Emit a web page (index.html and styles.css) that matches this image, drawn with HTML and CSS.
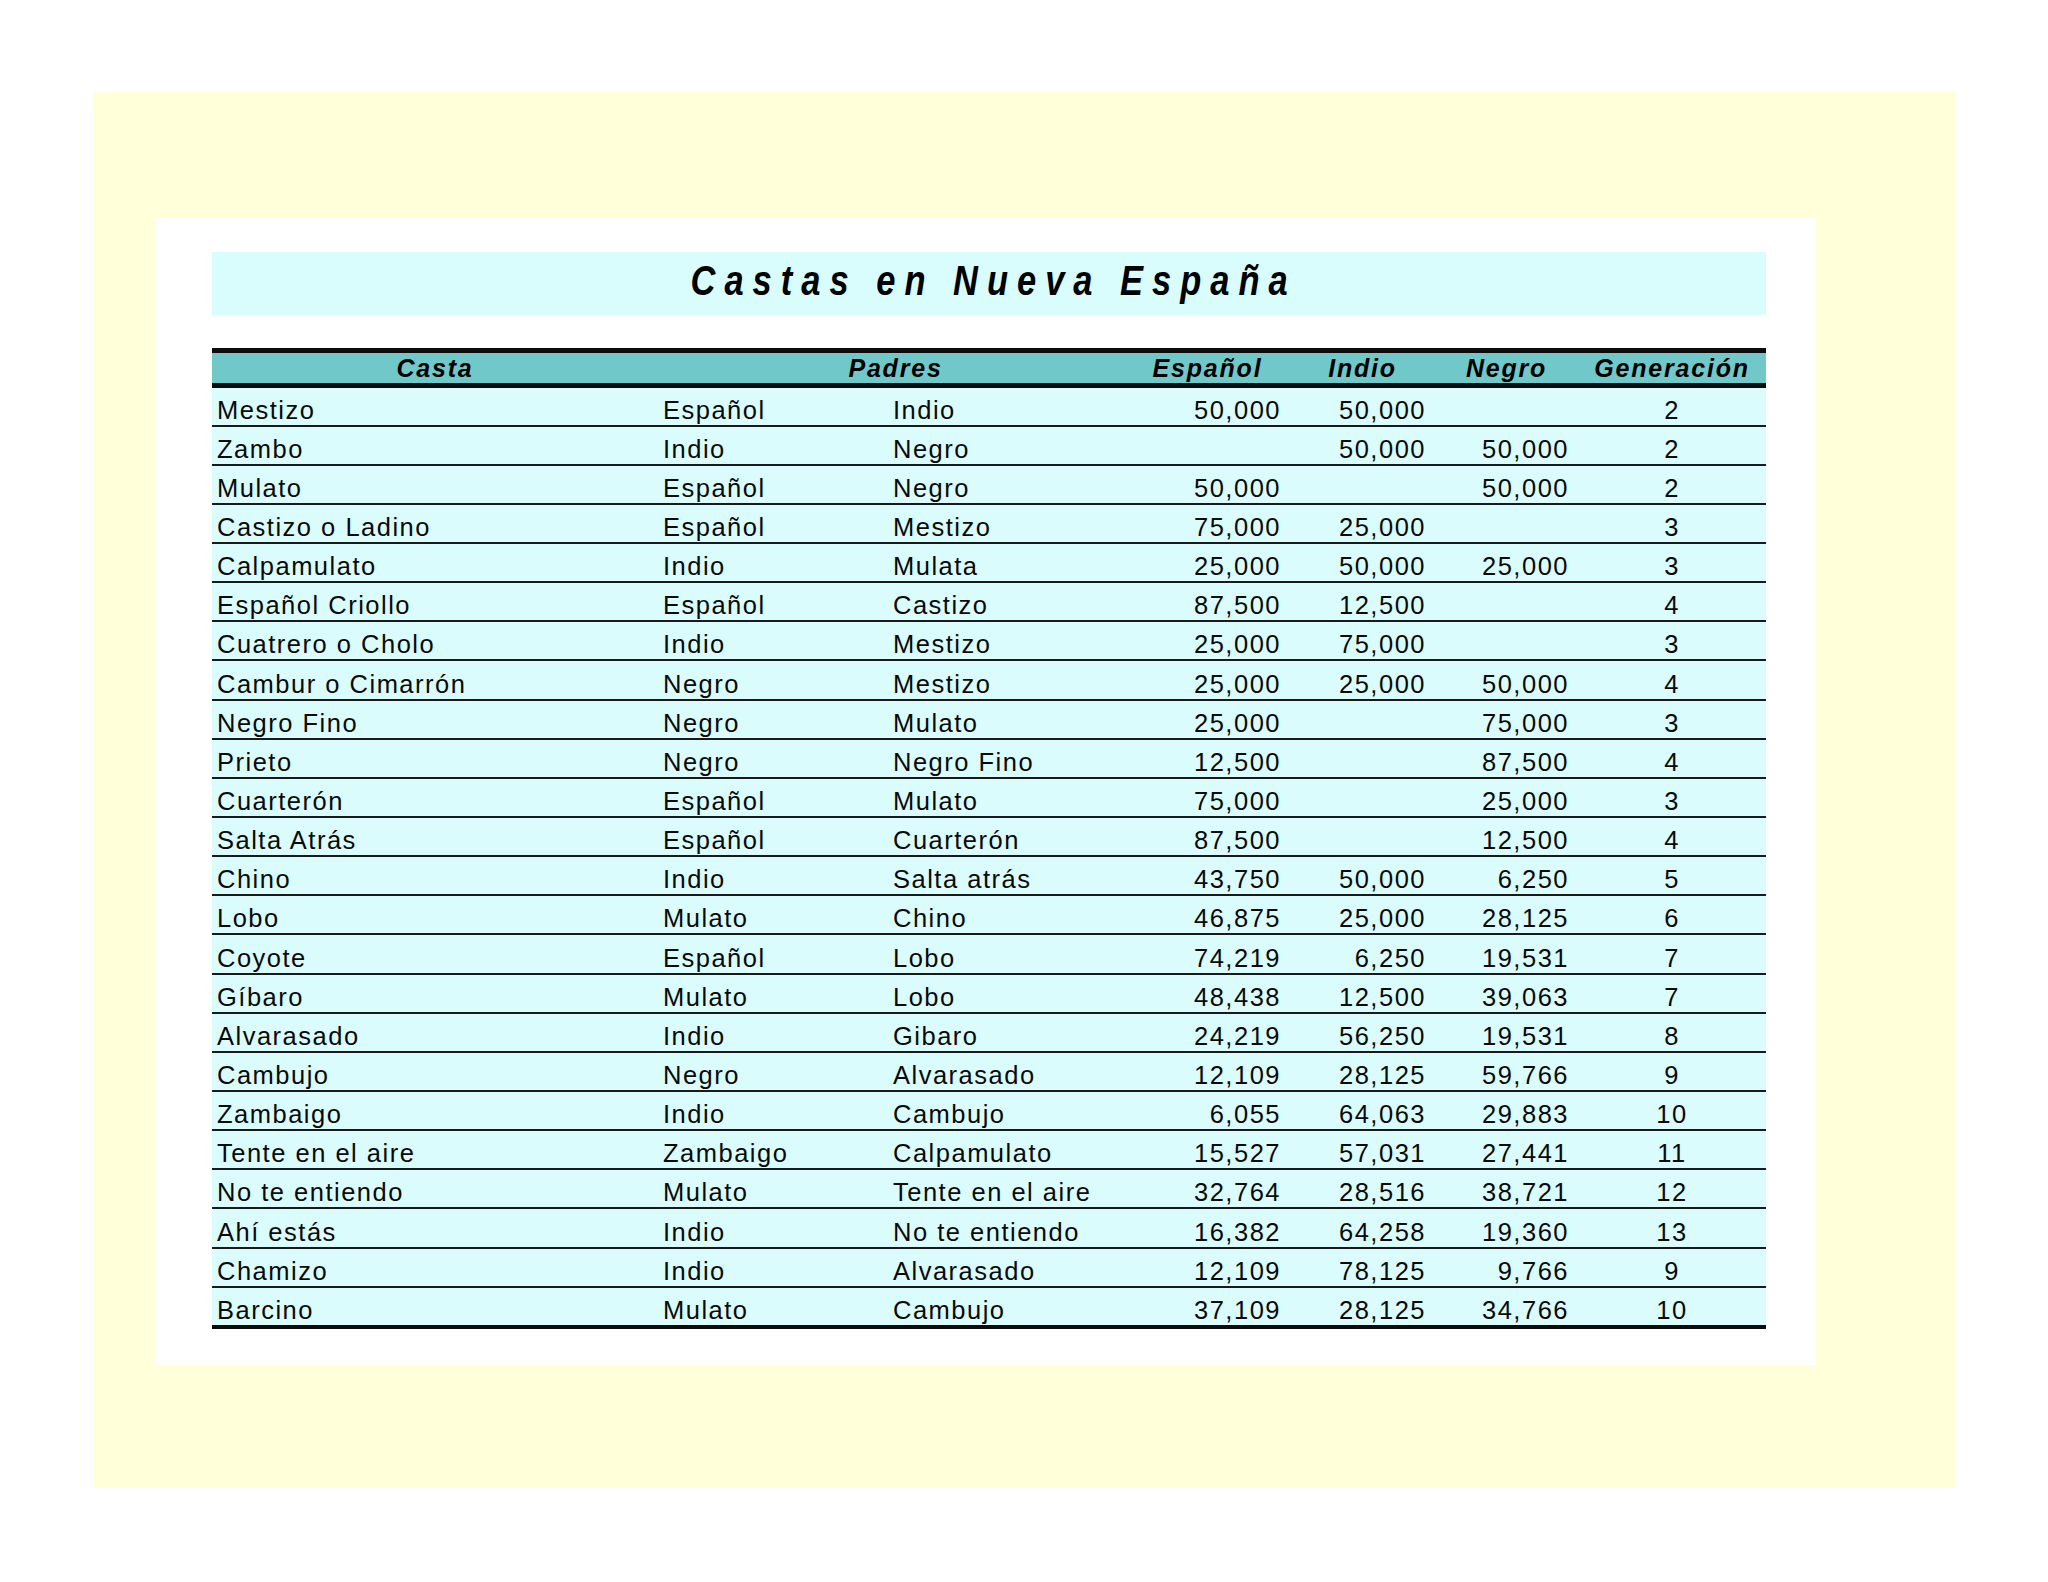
FILE: index.html
```html
<!DOCTYPE html>
<html lang="es">
<head>
<meta charset="utf-8">
<title>Castas en Nueva España</title>
<link rel="stylesheet" href="styles.css">
</head>
<body>
<div class="sheet">
  <div class="panel">
    <div class="title-bar"><h1 class="title">Castas en Nueva España</h1></div>
    <div class="table">
      <div class="head">
        <div class="hc c-casta">Casta</div>
        <div class="hc c-padres">Padres</div>
        <div class="hc">Español</div>
        <div class="hc">Indio</div>
        <div class="hc">Negro</div>
        <div class="hc">Generación</div>
      </div>
      <div class="row"><span>Mestizo</span><span>Español</span><span>Indio</span><span class="n">50,000</span><span class="n">50,000</span><span class="n"></span><span class="g">2</span></div>
      <div class="row"><span>Zambo</span><span>Indio</span><span>Negro</span><span class="n"></span><span class="n">50,000</span><span class="n">50,000</span><span class="g">2</span></div>
      <div class="row"><span>Mulato</span><span>Español</span><span>Negro</span><span class="n">50,000</span><span class="n"></span><span class="n">50,000</span><span class="g">2</span></div>
      <div class="row"><span>Castizo o Ladino</span><span>Español</span><span>Mestizo</span><span class="n">75,000</span><span class="n">25,000</span><span class="n"></span><span class="g">3</span></div>
      <div class="row"><span>Calpamulato</span><span>Indio</span><span>Mulata</span><span class="n">25,000</span><span class="n">50,000</span><span class="n">25,000</span><span class="g">3</span></div>
      <div class="row"><span>Español Criollo</span><span>Español</span><span>Castizo</span><span class="n">87,500</span><span class="n">12,500</span><span class="n"></span><span class="g">4</span></div>
      <div class="row"><span>Cuatrero o Cholo</span><span>Indio</span><span>Mestizo</span><span class="n">25,000</span><span class="n">75,000</span><span class="n"></span><span class="g">3</span></div>
      <div class="row"><span>Cambur o Cimarrón</span><span>Negro</span><span>Mestizo</span><span class="n">25,000</span><span class="n">25,000</span><span class="n">50,000</span><span class="g">4</span></div>
      <div class="row"><span>Negro Fino</span><span>Negro</span><span>Mulato</span><span class="n">25,000</span><span class="n"></span><span class="n">75,000</span><span class="g">3</span></div>
      <div class="row"><span>Prieto</span><span>Negro</span><span>Negro Fino</span><span class="n">12,500</span><span class="n"></span><span class="n">87,500</span><span class="g">4</span></div>
      <div class="row"><span>Cuarterón</span><span>Español</span><span>Mulato</span><span class="n">75,000</span><span class="n"></span><span class="n">25,000</span><span class="g">3</span></div>
      <div class="row"><span>Salta Atrás</span><span>Español</span><span>Cuarterón</span><span class="n">87,500</span><span class="n"></span><span class="n">12,500</span><span class="g">4</span></div>
      <div class="row"><span>Chino</span><span>Indio</span><span>Salta atrás</span><span class="n">43,750</span><span class="n">50,000</span><span class="n">6,250</span><span class="g">5</span></div>
      <div class="row"><span>Lobo</span><span>Mulato</span><span>Chino</span><span class="n">46,875</span><span class="n">25,000</span><span class="n">28,125</span><span class="g">6</span></div>
      <div class="row"><span>Coyote</span><span>Español</span><span>Lobo</span><span class="n">74,219</span><span class="n">6,250</span><span class="n">19,531</span><span class="g">7</span></div>
      <div class="row"><span>Gíbaro</span><span>Mulato</span><span>Lobo</span><span class="n">48,438</span><span class="n">12,500</span><span class="n">39,063</span><span class="g">7</span></div>
      <div class="row"><span>Alvarasado</span><span>Indio</span><span>Gibaro</span><span class="n">24,219</span><span class="n">56,250</span><span class="n">19,531</span><span class="g">8</span></div>
      <div class="row"><span>Cambujo</span><span>Negro</span><span>Alvarasado</span><span class="n">12,109</span><span class="n">28,125</span><span class="n">59,766</span><span class="g">9</span></div>
      <div class="row"><span>Zambaigo</span><span>Indio</span><span>Cambujo</span><span class="n">6,055</span><span class="n">64,063</span><span class="n">29,883</span><span class="g">10</span></div>
      <div class="row"><span>Tente en el aire</span><span>Zambaigo</span><span>Calpamulato</span><span class="n">15,527</span><span class="n">57,031</span><span class="n">27,441</span><span class="g">11</span></div>
      <div class="row"><span>No te entiendo</span><span>Mulato</span><span>Tente en el aire</span><span class="n">32,764</span><span class="n">28,516</span><span class="n">38,721</span><span class="g">12</span></div>
      <div class="row"><span>Ahí estás</span><span>Indio</span><span>No te entiendo</span><span class="n">16,382</span><span class="n">64,258</span><span class="n">19,360</span><span class="g">13</span></div>
      <div class="row"><span>Chamizo</span><span>Indio</span><span>Alvarasado</span><span class="n">12,109</span><span class="n">78,125</span><span class="n">9,766</span><span class="g">9</span></div>
      <div class="row last"><span>Barcino</span><span>Mulato</span><span>Cambujo</span><span class="n">37,109</span><span class="n">28,125</span><span class="n">34,766</span><span class="g">10</span></div>
    </div>
  </div>
</div>
</body>
</html>
```
FILE: styles.css
```css
html, body {
  margin: 0;
  padding: 0;
  background: #ffffff;
}

body {
  font-family: "Liberation Sans", Arial, sans-serif;
  color: #0a0a0a;
}

.sheet {
  box-sizing: border-box;
  margin-left: 93px;
  margin-top: 92px;
  width: 1862px;
  height: 1395px;
  background: #ffffd9;
  padding-left: 63px;
  padding-top: 125px;
}

.panel {
  box-sizing: border-box;
  width: 1660px;
  height: 1148px;
  background: #ffffff;
  padding: 35px 0 0 56px;
}

.title-bar {
  box-sizing: border-box;
  width: 1554px;
  height: 63px;
  background: #d9fcfc;
  padding-bottom: 6px;
  text-align: center;
}

/* condensed look of the original (Helvetica Narrow) */
.title {
  display: inline-block;
  margin: 0;
  padding-left: 11px;
  font-family: "Liberation Sans", Arial, sans-serif;
  font-size: 42px;
  font-weight: bold;
  font-style: italic;
  line-height: 57px;
  letter-spacing: 11px;
  color: #000000;
  transform: scaleX(0.82);
  transform-origin: center;
}

.table {
  width: 1554px;
  margin-top: 32.5px;
}

.head,
.row {
  display: grid;
  grid-template-columns: 446px 230px 237px 165px 145px 143px 188px;
  box-sizing: border-box;
  align-items: end;
}

.head {
  height: 40px;
  background: #70c8c9;
  border-top: 5px solid #0c0c0c;
  border-bottom: 5px solid #0c0c0c;
  font-size: 25px;
  font-weight: bold;
  font-style: italic;
  letter-spacing: 1.8px;
  line-height: 28px;
}

.hc {
  text-align: center;
  padding-bottom: 1px;
  color: #000000;
}

.c-padres {
  grid-column: span 2;
  padding-left: 8px;
}

.row {
  height: 39.15px;
  background: #dafcfc;
  border-bottom: 2.3px solid #1a1a1a;
  font-size: 25.5px;
  letter-spacing: 1.5px;
  line-height: 28px;
  white-space: nowrap;
}

.row.last {
  height: 41.2px;
  border-bottom: 4.5px solid #0c0c0c;
}

.row span {
  padding-left: 5px;
  padding-bottom: 1px;
}

.row .n {
  padding-left: 0;
  padding-right: 9px;
  text-align: right;
}

.row .g {
  padding-left: 0;
  text-align: center;
}
```
